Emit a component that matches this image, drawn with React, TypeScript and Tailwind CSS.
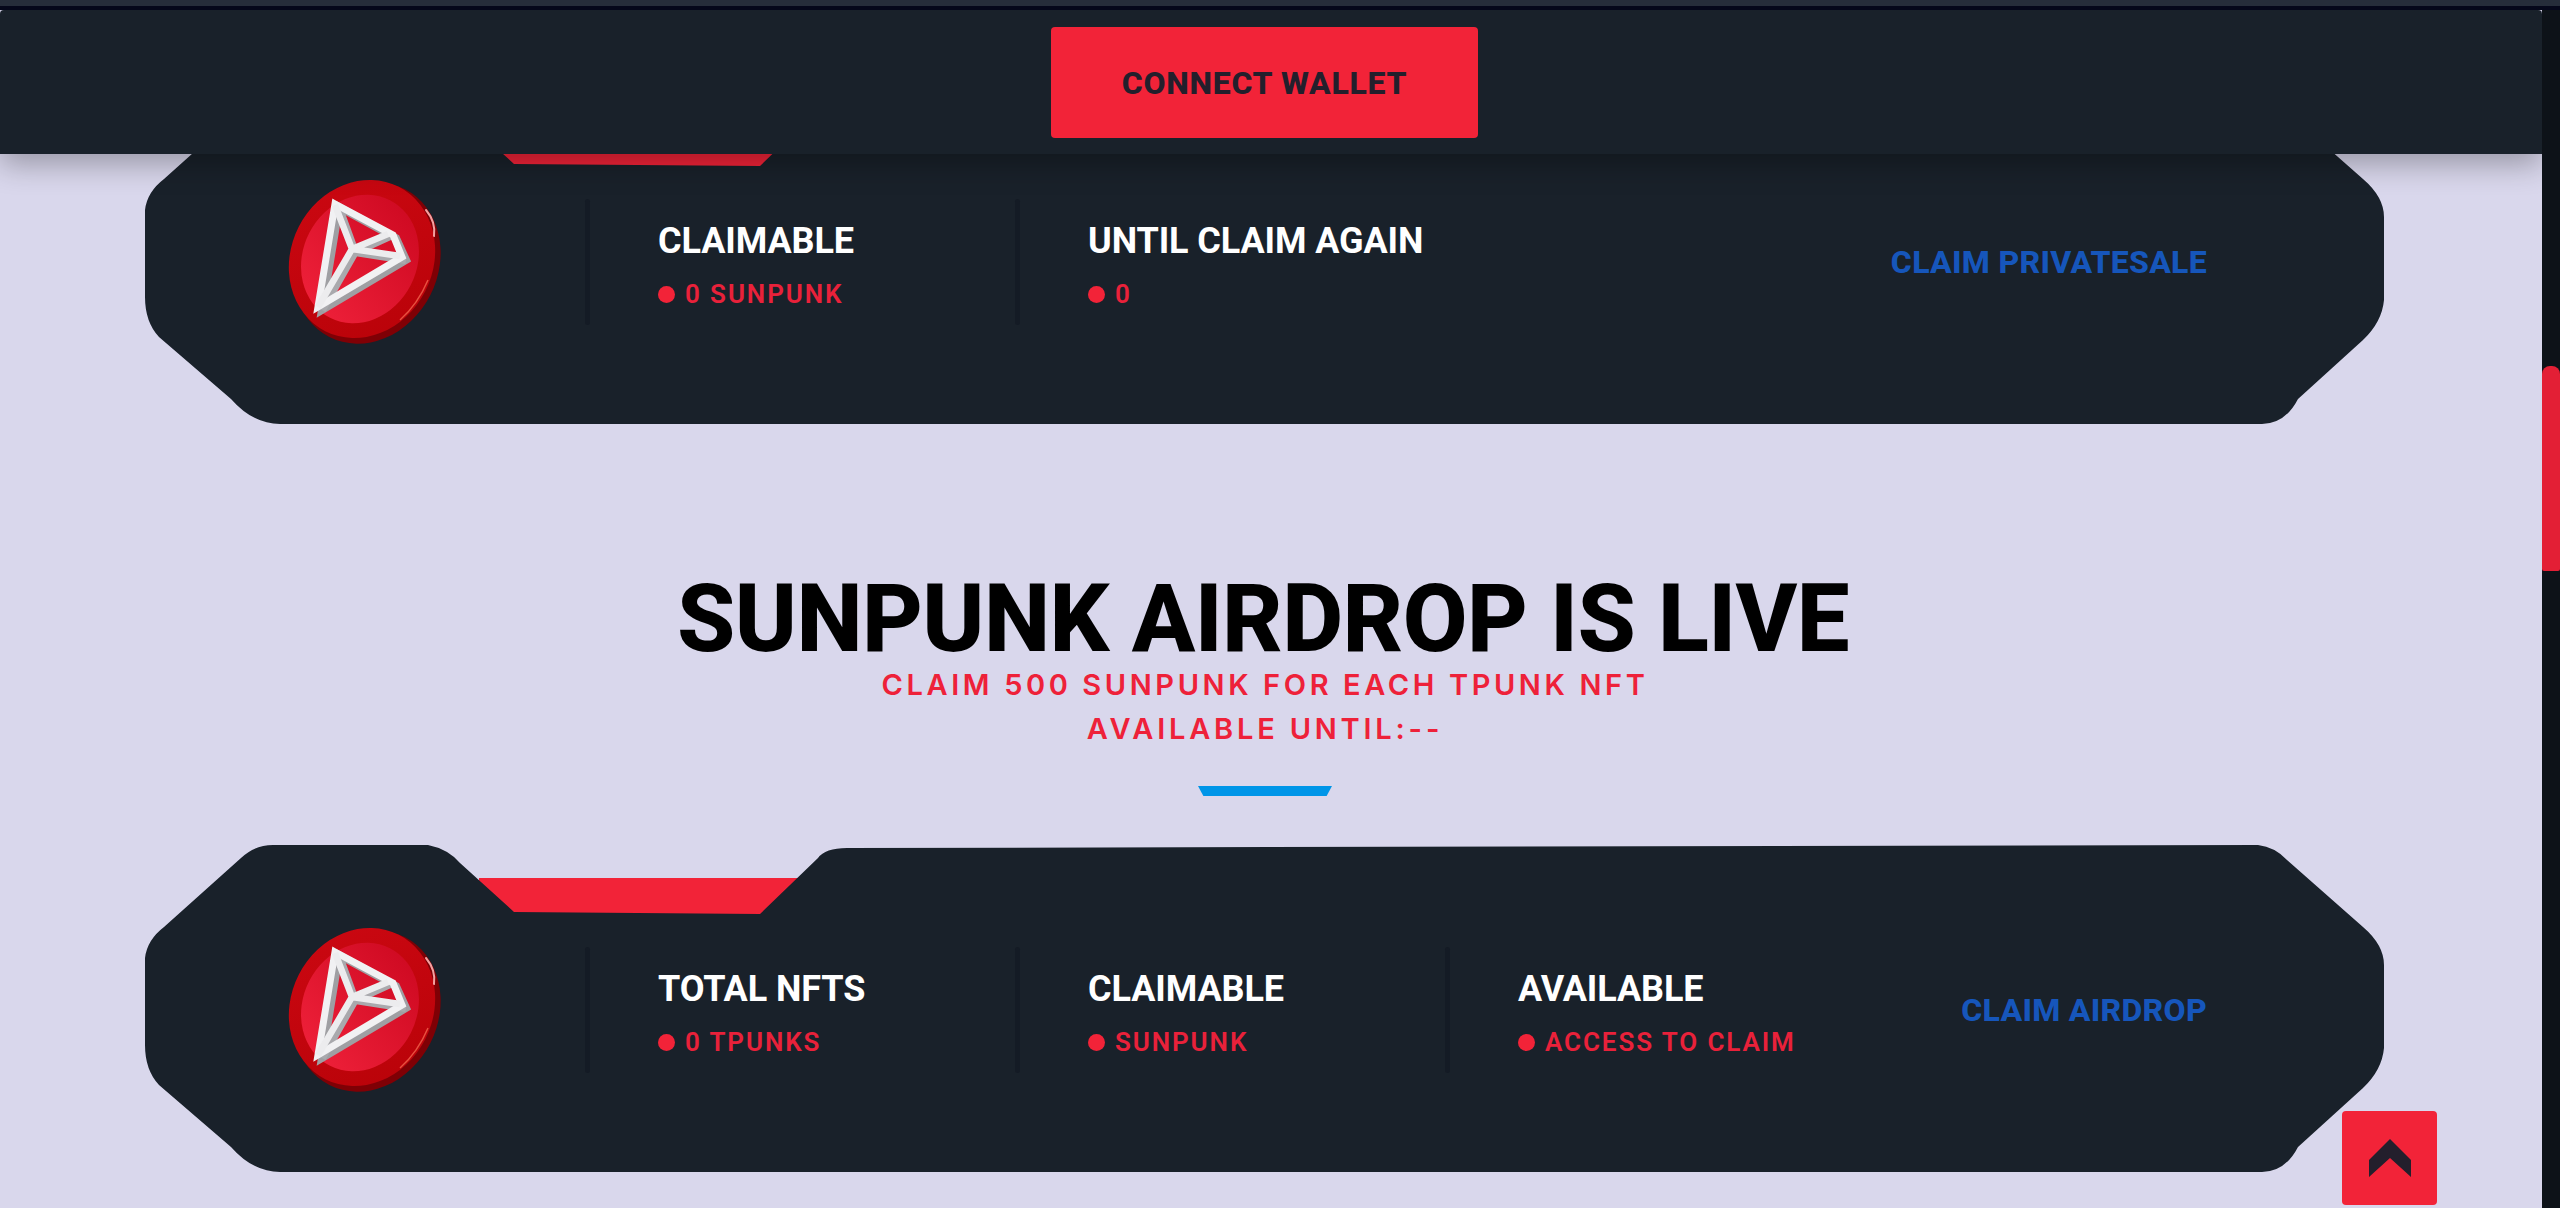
import React from "react";

const HEAD = "font-['Roboto',sans-serif]";

function Coin() {
  return (
    <svg width="190" height="180" viewBox="0 0 190 180" className="shrink-0">
      <defs>
        <linearGradient id="face" x1="0.7" y1="0" x2="0.3" y2="1">
          <stop offset="0" stopColor="#cf0a22" />
          <stop offset="1" stopColor="#ee2039" />
        </linearGradient>
        <linearGradient id="rim" x1="0" y1="0" x2="1" y2="1">
          <stop offset="0" stopColor="#cc0812" />
          <stop offset="1" stopColor="#b80208" />
        </linearGradient>
      </defs>
      <ellipse cx="99" cy="91" rx="71" ry="83" transform="rotate(27 99 91)" fill="#7f0005" />
      <ellipse cx="94" cy="87" rx="71" ry="81" transform="rotate(27 94 87)" fill="url(#rim)" />
      <ellipse cx="92" cy="87" rx="57" ry="66" transform="rotate(27 92 87)" fill="url(#face)" />
      <path d="M158 38 Q168 50 166 64" fill="none" stroke="#f4a0a0" strokeWidth="2" strokeLinecap="round" />
      <path d="M132 148 Q150 132 160 108" fill="none" stroke="#e8503f" strokeWidth="1.5" />
      <g fill="none" strokeLinejoin="miter">
        <path d="M71 35 L128 66 L138 88 L54 138 Z" stroke="#9f9fa3" strokeWidth="8" />
        <path d="M71 36 L87 80 L54 138 M87 80 L138 88 M87 80 L122 64" stroke="#a9a9ad" strokeWidth="8" />
        <path d="M67 32 L125 63 L134 85 L50 135 Z" stroke="#f1f1f3" strokeWidth="7" />
        <path d="M67 33 L84 77 L50 135 M84 77 L132 84 M84 77 L120 62" stroke="#ececee" strokeWidth="6.5" />
      </g>
    </svg>
  );
}

function Stat({ title, value }: { title: string; value: string }) {
  return (
    <div className="w-[430px] h-full shrink-0 flex">
      <div className="w-[5px] h-full bg-[#141b25] rounded-full shrink-0" />
      <div className="pl-[68px] pt-[24px] flex flex-col gap-[17px]">
        <div className={`${HEAD} text-[36px] leading-[36px] font-bold tracking-[-0.1px] text-white whitespace-nowrap`}>{title}</div>
        <div className="flex items-center gap-[10px] h-[36px]">
          <span className="w-[17px] h-[17px] rounded-full bg-[#f22338] shrink-0" />
          <span className={`${HEAD} text-[26px] leading-[36px] font-semibold tracking-[1.9px] text-[#e9213a] whitespace-nowrap`}>{value}</span>
        </div>
      </div>
    </div>
  );
}

function Card({ stats, action }: { stats: { title: string; value: string }[]; action: string }) {
  return (
    <div className="relative h-[327px] w-[2239px] ml-[145px]">
      <div className="absolute left-[334px] top-[33px] w-[318px] h-[38px] bg-[#f22338]" />
      <div className="relative h-full bg-[#19212a] pt-[102px] [clip-path:path('M128_0L283_0Q303_4_315_18L369_67L615_69L673_13Q680_3_702_3L2113_0Q2130_2_2142_15L2218_82Q2239_100_2239_120L2239_203Q2237_225_2218_243L2153_302Q2140_327_2117_327L135_327Q108_327_86_302L14_240Q0_225_0_200L0_113Q2_95_19_82L96_13Q110_0_128_0Z')]">
        <div className="flex h-[126px]">
          <div className="w-[440px] shrink-0 flex items-center pl-[123px]">
            <Coin />
          </div>
          {stats.map((s) => (
            <Stat key={s.title} title={s.title} value={s.value} />
          ))}
          <div className="flex-1 flex items-center justify-end pr-[177px]">
            <span className={`${HEAD} text-[32px] leading-[36px] font-extrabold tracking-[0.3px] text-[#1656bb] whitespace-nowrap`}>{action}</span>
          </div>
        </div>
      </div>
    </div>
  );
}

export default function App() {
  return (
    <div className="w-[2560px] h-[1208px] overflow-hidden flex flex-col bg-[#d9d7ec]">
      <div className="h-[6px] bg-[#262d3a] shrink-0" />
      <div className="h-[4px] bg-[#05071a] shrink-0" />
      <div className="flex flex-1 min-h-0">
        <div className="relative flex-1 min-w-0 overflow-hidden pt-[87px]">
          <Card
            stats={[
              { title: "CLAIMABLE", value: "0 SUNPUNK" },
              { title: "UNTIL CLAIM AGAIN", value: "0" },
            ]}
            action="CLAIM PRIVATESALE"
          />
          <div className="w-[2240px] ml-[145px] mt-[151px] flex flex-col items-center">
            <h1 className={`${HEAD} text-[94px] leading-[88px] font-extrabold tracking-[-0.6px] mr-[4px] text-black whitespace-nowrap`}>SUNPUNK AIRDROP IS LIVE</h1>
            <p className="font-['Inter',sans-serif] text-[29px] leading-[44px] font-semibold tracking-[3.6px] text-[#ee2139] whitespace-nowrap">CLAIM 500 SUNPUNK FOR EACH TPUNK NFT</p>
            <p className="font-['Inter',sans-serif] text-[29px] leading-[44px] font-semibold tracking-[3.8px] text-[#ee2139] whitespace-nowrap">AVAILABLE UNTIL:--</p>
            <div className="mt-[35px] w-[134px] h-[10px] bg-[#0095e8] [clip-path:polygon(0_0,100%_0,96%_100%,4%_100%)]" />
          </div>
          <div className="mt-[49px]">
            <Card
              stats={[
                { title: "TOTAL NFTS", value: "0 TPUNKS" },
                { title: "CLAIMABLE", value: "SUNPUNK" },
                { title: "AVAILABLE", value: "ACCESS TO CLAIM" },
              ]}
              action="CLAIM AIRDROP"
            />
          </div>
          <div className="absolute left-0 right-0 top-0 h-[144px] bg-[#19212a] rounded-t-[4px] flex justify-center shadow-[0_10px_30px_rgba(0,0,0,0.3)]">
            <button className="mt-[17px] ml-[-13px] w-[427px] h-[111px] rounded-[4px] bg-[#f22338] flex items-center justify-center">
              <span className={`${HEAD} text-[32px] font-extrabold tracking-[0.7px] text-[#231f2c] whitespace-nowrap`}>CONNECT WALLET</span>
            </button>
          </div>
          <button className="absolute left-[2342px] top-[1101px] w-[95px] h-[94px] rounded-[4px] bg-[#f22338] flex items-center justify-center">
            <svg width="42" height="38" viewBox="0 0 42 38">
              <polygon points="21,0 42,21 42,38 21,19 0,38 0,21" fill="#231f2c" />
            </svg>
          </button>
        </div>
        <div className="w-[18px] shrink-0 bg-[#0d1218]">
          <div className="mt-[356px] h-[205px] bg-[#e31f35] rounded-t-[8px] rounded-b-[2px]" />
        </div>
      </div>
    </div>
  );
}
